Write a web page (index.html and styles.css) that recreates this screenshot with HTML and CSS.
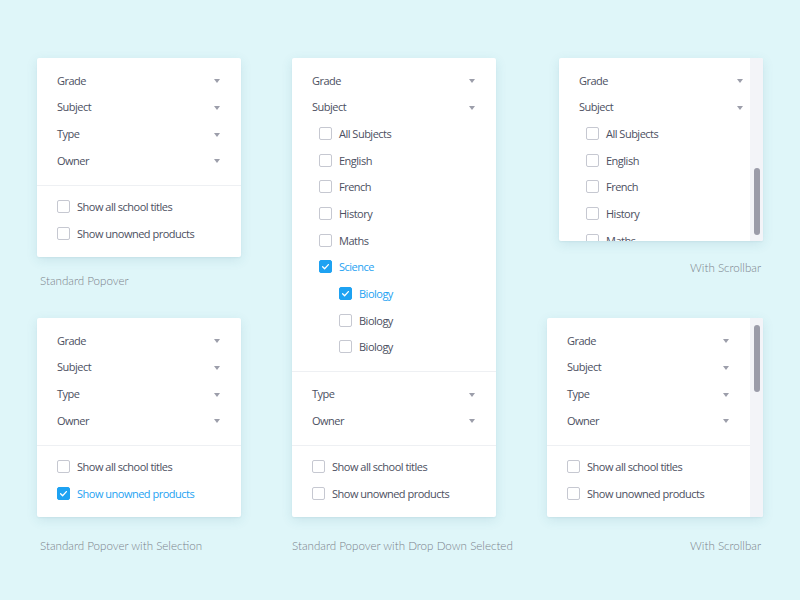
FILE: index.html
```html
<!DOCTYPE html>
<html>
<head>
<meta charset="utf-8">
<link rel="stylesheet" href="styles.css">
</head>
<body>
<div class="board">
  <!-- Column 1 -->
  <div class="cell c1r1">
    <div class="card">
      <div class="section">
        <div class="row"><span>Grade</span><i class="caret"></i></div>
        <div class="row"><span>Subject</span><i class="caret"></i></div>
        <div class="row"><span>Type</span><i class="caret"></i></div>
        <div class="row"><span>Owner</span><i class="caret"></i></div>
      </div>
      <div class="section foot">
        <div class="check"><i class="box"></i><span>Show all school titles</span></div>
        <div class="check"><i class="box"></i><span>Show unowned products</span></div>
      </div>
    </div>
    <div class="caption cap-top">Standard Popover</div>
  </div>

  <div class="cell c1r2">
    <div class="card">
      <div class="section">
        <div class="row"><span>Grade</span><i class="caret"></i></div>
        <div class="row"><span>Subject</span><i class="caret"></i></div>
        <div class="row"><span>Type</span><i class="caret"></i></div>
        <div class="row"><span>Owner</span><i class="caret"></i></div>
      </div>
      <div class="section foot">
        <div class="check"><i class="box"></i><span>Show all school titles</span></div>
        <div class="check on"><i class="box"><svg viewBox="0 0 13 13"><path d="M3.6 6.8 L5.6 8.7 L9.4 4.6"/></svg></i><span>Show unowned products</span></div>
      </div>
    </div>
    <div class="caption cap-bot">Standard Popover with Selection</div>
  </div>

  <!-- Column 2 -->
  <div class="cell c2">
    <div class="card">
      <div class="section">
        <div class="row"><span>Grade</span><i class="caret"></i></div>
        <div class="row"><span>Subject</span><i class="caret"></i></div>
        <div class="check lvl1"><i class="box"></i><span>All Subjects</span></div>
        <div class="check lvl1"><i class="box"></i><span>English</span></div>
        <div class="check lvl1"><i class="box"></i><span>French</span></div>
        <div class="check lvl1"><i class="box"></i><span>History</span></div>
        <div class="check lvl1"><i class="box"></i><span>Maths</span></div>
        <div class="check lvl1 on"><i class="box"><svg viewBox="0 0 13 13"><path d="M3.6 6.8 L5.6 8.7 L9.4 4.6"/></svg></i><span>Science</span></div>
        <div class="check lvl2 on"><i class="box"><svg viewBox="0 0 13 13"><path d="M3.6 6.8 L5.6 8.7 L9.4 4.6"/></svg></i><span>Biology</span></div>
        <div class="check lvl2"><i class="box"></i><span>Biology</span></div>
        <div class="check lvl2"><i class="box"></i><span>Biology</span></div>
      </div>
      <div class="section mid">
        <div class="row"><span>Type</span><i class="caret"></i></div>
        <div class="row"><span>Owner</span><i class="caret"></i></div>
      </div>
      <div class="section foot">
        <div class="check"><i class="box"></i><span>Show all school titles</span></div>
        <div class="check"><i class="box"></i><span>Show unowned products</span></div>
      </div>
    </div>
    <div class="caption cap-bot">Standard Popover with Drop Down Selected</div>
  </div>

  <!-- Column 3 -->
  <div class="cell c3r1">
    <div class="card scroll short">
      <div class="scroll-body">
        <div class="section">
          <div class="row"><span>Grade</span><i class="caret"></i></div>
          <div class="row"><span>Subject</span><i class="caret"></i></div>
          <div class="check lvl1"><i class="box"></i><span>All Subjects</span></div>
          <div class="check lvl1"><i class="box"></i><span>English</span></div>
          <div class="check lvl1"><i class="box"></i><span>French</span></div>
          <div class="check lvl1"><i class="box"></i><span>History</span></div>
          <div class="check lvl1"><i class="box"></i><span>Maths</span></div>
        </div>
      </div>
      <div class="track track-low"><div class="thumb"></div></div>
    </div>
    <div class="caption right cap-mid">With Scrollbar</div>
  </div>

  <div class="cell c3r2">
    <div class="card scroll wide">
      <div class="scroll-body">
        <div class="section">
          <div class="row"><span>Grade</span><i class="caret"></i></div>
          <div class="row"><span>Subject</span><i class="caret"></i></div>
          <div class="row"><span>Type</span><i class="caret"></i></div>
          <div class="row"><span>Owner</span><i class="caret"></i></div>
        </div>
        <div class="section foot">
          <div class="check"><i class="box"></i><span>Show all school titles</span></div>
          <div class="check"><i class="box"></i><span>Show unowned products</span></div>
        </div>
      </div>
      <div class="track track-high"><div class="thumb"></div></div>
    </div>
    <div class="caption right cap-bot">With Scrollbar</div>
  </div>
</div>
</body>
</html>
```

FILE: styles.css
```css
* { box-sizing: border-box; }

html, body {
  margin: 0;
  padding: 0;
  background: #dff6f9;
  width: 800px;
  height: 600px;
  overflow: hidden;
}

body {
  font-family: "Open Sans", "Noto Sans", sans-serif;
  font-size: 11px;
  letter-spacing: -0.5px;
  color: #4c5061;
}

.board {
  display: grid;
  grid-template-columns: 204px 204px 216px;
  grid-template-rows: 260px auto;
  column-gap: 51px;
  padding: 58px 0 0 37px;
}

.c1r1 { grid-column: 1; grid-row: 1; }
.c1r2 { grid-column: 1; grid-row: 2; }
.c2 { grid-column: 2; grid-row: 1 / span 2; }
.c3r1 { grid-column: 3; grid-row: 1; display: flex; flex-direction: column; align-items: flex-end; }
.c3r2 { grid-column: 3; grid-row: 2; }

.card {
  background: #ffffff;
  border-radius: 2px;
  box-shadow: 0 3px 12px rgba(40, 110, 130, 0.12), 0 1px 2px rgba(40, 110, 130, 0.06);
  overflow: hidden;
}

.section {
  padding: 9px 0 11px;
  border-top: 1px solid #eef0f3;
}
.section:first-child { border-top: none; }
.section.mid { padding: 8px 0 11px; }
.section.foot { padding: 8px 0 10px; }

.row {
  height: 26.67px;
  display: flex;
  align-items: center;
  justify-content: space-between;
  padding: 0 21px 0 20px;
}

.caret {
  width: 0;
  height: 0;
  border-left: 3.5px solid transparent;
  border-right: 3.5px solid transparent;
  border-top: 4px solid #9c9eaa;
  margin-top: 2px;
}

.check {
  height: 26.67px;
  display: flex;
  align-items: center;
  gap: 7px;
  padding-left: 20px;
}
.check.lvl1 { padding-left: 27px; }
.check.lvl2 { padding-left: 47px; }

.box {
  width: 13px;
  height: 13px;
  border: 1px solid #c6c8d1;
  border-radius: 2px;
  background: #fff;
  flex: none;
  display: block;
}
.box svg { display: block; width: 13px; height: 13px; margin: -1px; }
.box svg path {
  fill: none;
  stroke: #ffffff;
  stroke-width: 1.3;
  stroke-linecap: round;
  stroke-linejoin: round;
}

.check.on .box {
  background: #1ea2f2;
  border-color: #1ea2f2;
}
.check.on span { color: #1ea2f2; }

.caption {
  font-family: "Lato", "Open Sans", sans-serif;
  font-weight: 300;
  font-size: 11.6px;
  color: #7b828b;
  line-height: 16px;
  letter-spacing: 0;
  white-space: nowrap;
  padding-left: 3px;
}
.c2 .caption { padding-left: 0; }
.caption.right { text-align: right; padding-left: 0; padding-right: 2px; }
.cap-top { margin-top: 16px; }
.cap-mid { margin-top: 19px; }
.cap-bot { margin-top: 21px; }

/* scrollbar cards */
.card.scroll {
  display: flex;
  position: relative;
}
.card.short { width: 204px; height: 183px; }
.card.short .row { padding-right: 7px; }
.card.wide { width: 216px; }
.scroll-body { flex: 1; min-width: 0; }

.track {
  width: 13px;
  flex: none;
  background: #f3f4f8;
  position: relative;
}
.thumb {
  position: absolute;
  left: 4px;
  width: 6px;
  height: 67px;
  border-radius: 3px;
  background: #9b9ca9;
}
.track-low .thumb { top: 110px; }
.track-high .thumb { top: 7px; }
```
